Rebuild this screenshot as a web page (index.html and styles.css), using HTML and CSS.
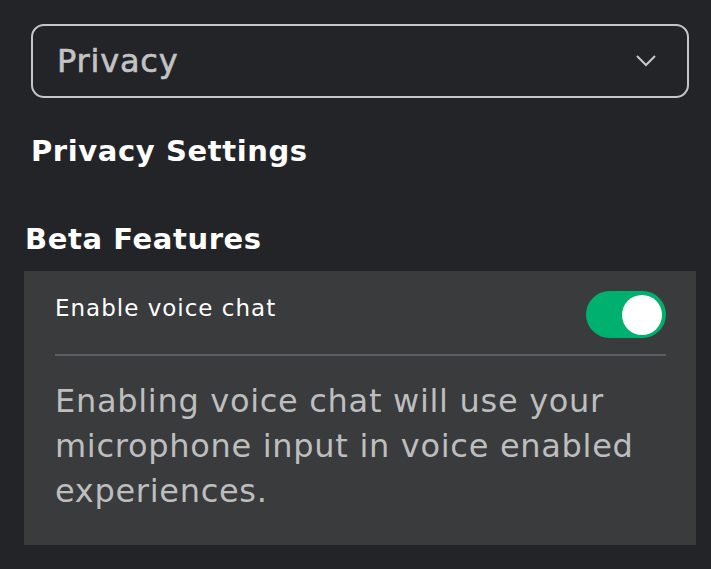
FILE: index.html
```html
<!DOCTYPE html>
<html>
<head>
<meta charset="utf-8">
<link rel="stylesheet" href="styles.css">
</head>
<body>
<div class="page">
  <div class="dropdown">
    <span class="dropdown-label">Privacy</span>
    <svg class="chevron" width="22" height="14" viewBox="0 0 22 14"><path d="M2 2 L11 11 L20 2" fill="none" stroke="#c8c8c8" stroke-width="2"/></svg>
  </div>
  <h2 class="section-title">Privacy Settings</h2>
  <h2 class="group-title">Beta Features</h2>
  <div class="card">
    <div class="row">
      <span class="row-label">Enable voice chat</span>
      <div class="toggle"><div class="knob"></div></div>
    </div>
    <div class="divider"></div>
    <p class="desc">Enabling voice chat will use your microphone input in voice enabled experiences.</p>
  </div>
</div>
</body>
</html>
```

FILE: styles.css
```css
html, body {
  margin: 0;
  padding: 0;
  background: #232427;
  font-family: "DejaVu Sans", "Open Sans", sans-serif;
}
.page {
  padding: 24px 15px 0 24px;
  display: flex;
  flex-direction: column;
}
.dropdown {
  margin: 0 7px;
  height: 70px;
  border: 2px solid #c6c6c6;
  border-radius: 13px;
  display: flex;
  align-items: center;
  justify-content: space-between;
  padding: 0 30px 0 24px;
}
.dropdown-label {
  color: #c2c3c3;
  font-size: 32px;
  font-weight: 400;
  letter-spacing: 0.8px;
  -webkit-text-stroke: 0.6px #c2c3c3;
}
.chevron {
  display: block;
}
.section-title {
  margin: 30px 0 0 7px;
  color: #ffffff;
  font-size: 29px;
  font-weight: 700;
  letter-spacing: 0.6px;
  line-height: 46px;
}
.group-title {
  margin: 42px 0 0 1px;
  color: #ffffff;
  font-size: 29px;
  font-weight: 700;
  letter-spacing: 0.6px;
  line-height: 46px;
}
.card {
  margin-top: 9px;
  background: #393b3d;
  padding: 20px 30px 0 31px;
  height: 254px;
}
.row {
  display: flex;
  justify-content: space-between;
  align-items: flex-start;
}
.row-label {
  color: #ffffff;
  font-size: 23px;
  letter-spacing: 1px;
  line-height: 34px;
}
.toggle {
  width: 80px;
  height: 47px;
  border-radius: 24px;
  background: #00b06f;
  display: flex;
  align-items: center;
  justify-content: flex-end;
  padding-right: 4px;
  box-sizing: border-box;
}
.knob {
  width: 40px;
  height: 40px;
  border-radius: 50%;
  background: #ffffff;
}
.divider {
  margin-top: 16px;
  height: 2px;
  background: #5c5d60;
}
.desc {
  margin: 23px 0 0 0;
  color: #bdbebe;
  font-size: 32px;
  letter-spacing: 0.7px;
  line-height: 45px;
}
```
